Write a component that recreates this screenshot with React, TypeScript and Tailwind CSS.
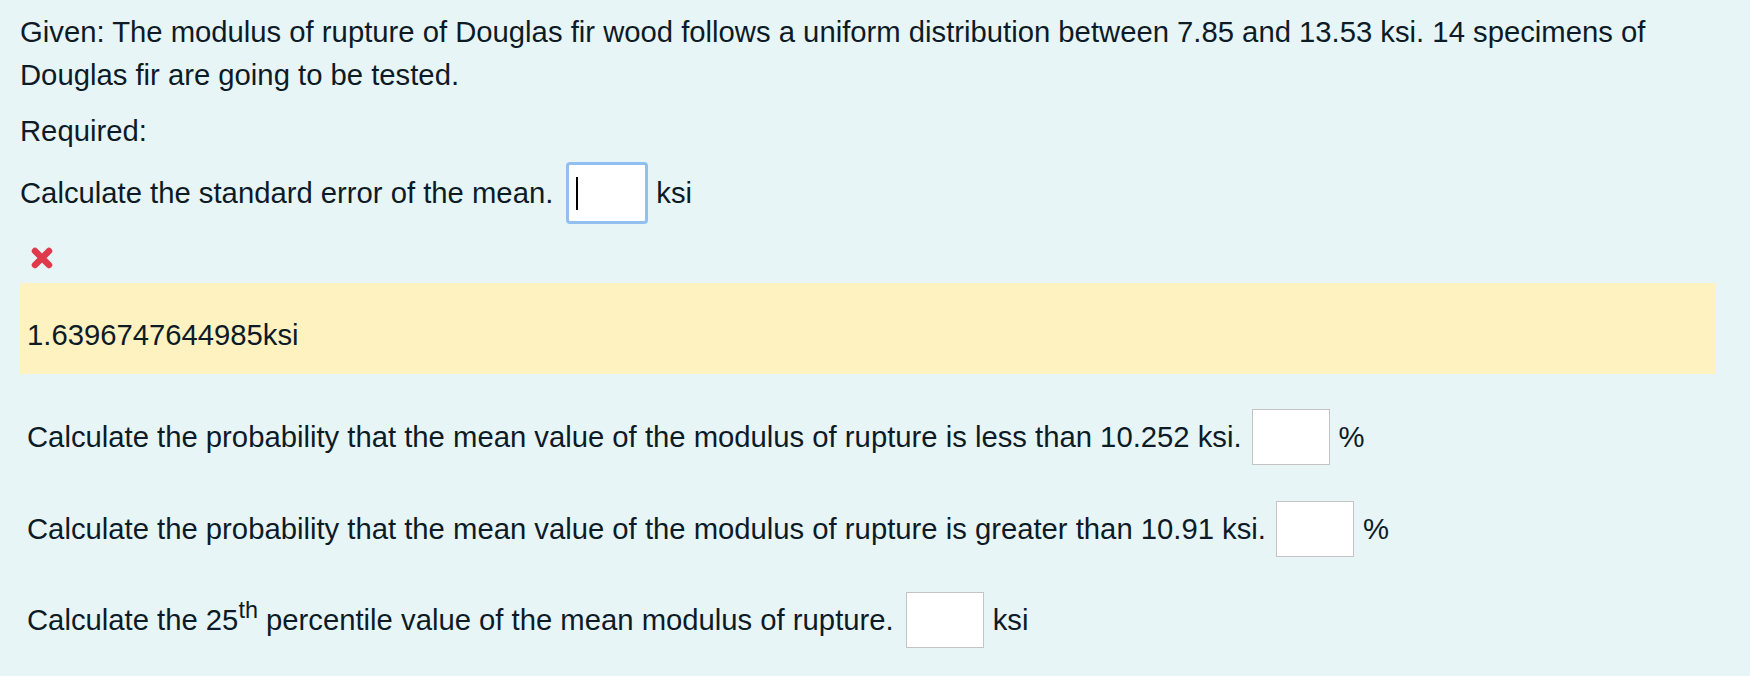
import React from 'react';

const Blank: React.FC = () => (
    <input
        type="text"
        className="w-[78px] h-[56px] bg-white border border-[#c4c4c4] outline-none"
    />
);

const App: React.FC = () => {
    return (
        <div className="min-h-screen bg-[#e8f5f7] text-[#0d1b26] font-['Liberation_Sans',Arial,sans-serif] text-[29.25px] leading-[43px]">
            <div className="pl-[20px] pr-[34px] pt-[11px]">
                <p>
                    Given: The modulus of rupture of Douglas fir wood follows a uniform distribution between 7.85 and 13.53 ksi. 14 specimens of
                    <br />
                    Douglas fir are going to be tested.
                </p>
                <p className="mt-[13px]">Required:</p>

                <div className="mt-[9px] flex items-center">
                    <span>Calculate the standard error of the mean.</span>
                    <div className="ml-[13px] w-[82px] h-[62px] rounded-[4px] border-[3px] border-[#92bff2] bg-white flex items-center pl-[7px]">
                        <span className="block w-[2px] h-[33px] bg-black" />
                    </div>
                    <span className="ml-[8px]">ksi</span>
                </div>

                <div className="mt-[23px] h-[22px] pl-[11px]">
                    <svg width="22" height="22" viewBox="0 0 22 22" className="block">
                        <path d="M4 4 L18 18 M18 4 L4 18" stroke="#df3a4c" strokeWidth="6.5" strokeLinecap="round" />
                    </svg>
                </div>

                <div className="mt-[14px] h-[91px] bg-[#fff2c1] px-[7px] pt-[31px]">1.6396747644985ksi</div>

                <div className="pl-[7px]">
                    <div className="mt-[35px] flex items-center">
                        <span>Calculate the probability that the mean value of the modulus of rupture is less than 10.252 ksi.</span>
                        <span className="ml-[10px]"><Blank /></span>
                        <span className="ml-[9px]">%</span>
                    </div>
                    <div className="mt-[36px] flex items-center">
                        <span>Calculate the probability that the mean value of the modulus of rupture is greater than 10.91 ksi.</span>
                        <span className="ml-[10px]"><Blank /></span>
                        <span className="ml-[9px]">%</span>
                    </div>
                    <div className="mt-[35px] flex items-center">
                        <span>
                            Calculate the 25<sup className="text-[0.8em]">th</sup> percentile value of the mean modulus of rupture.
                        </span>
                        <span className="ml-[12px]"><Blank /></span>
                        <span className="ml-[9px]">ksi</span>
                    </div>
                </div>
            </div>
        </div>
    );
};

export default App;
